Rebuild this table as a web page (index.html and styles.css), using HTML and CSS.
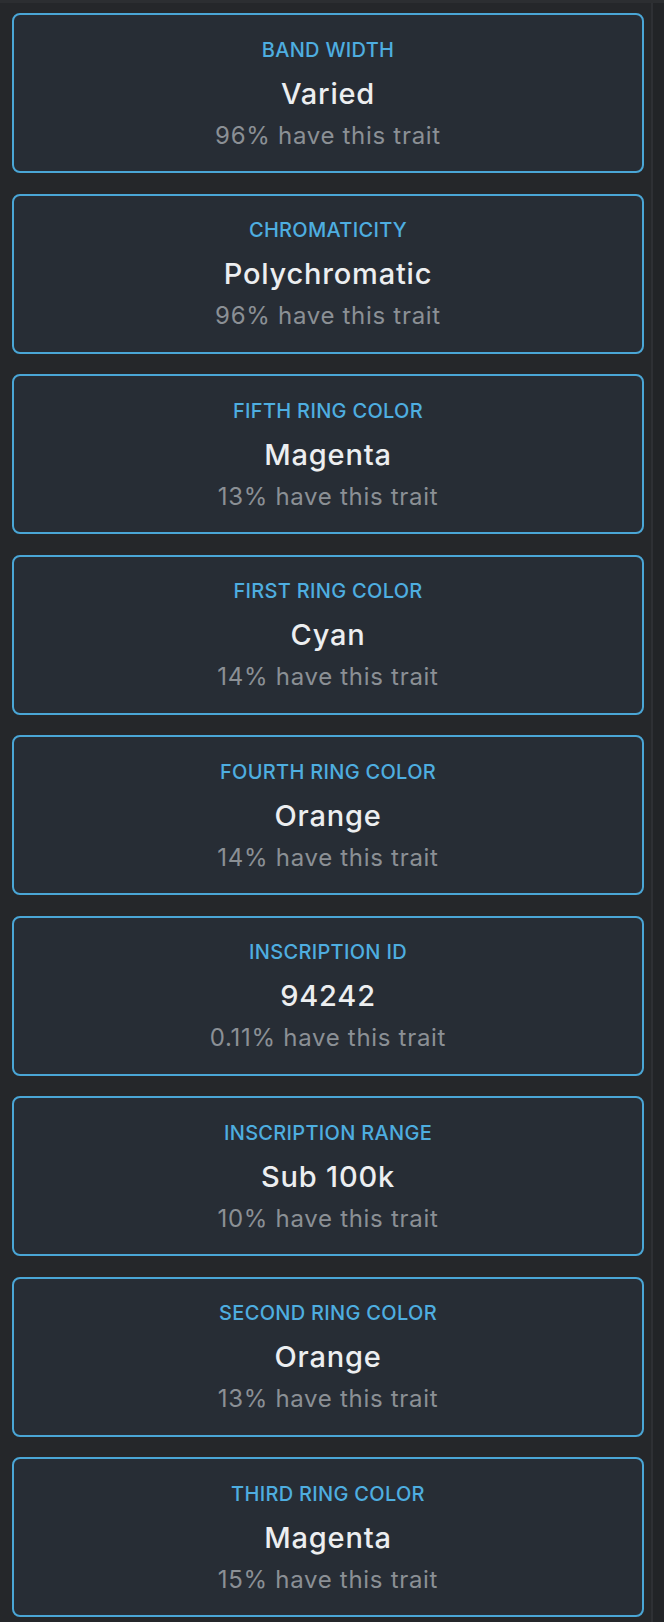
FILE: index.html
```html
<!DOCTYPE html>
<html>
<head>
<title>Traits</title>
<link rel="stylesheet" href="styles.css">
</head>
<body>
  <div class="topbar"></div>
  <div class="page">
    <div class="traits">
      <div class="trait">
        <p class="trait-name">BAND WIDTH</p>
        <p class="trait-value">Varied</p>
        <p class="trait-rarity">96% have this trait</p>
      </div>
      <div class="trait">
        <p class="trait-name">CHROMATICITY</p>
        <p class="trait-value">Polychromatic</p>
        <p class="trait-rarity">96% have this trait</p>
      </div>
      <div class="trait">
        <p class="trait-name">FIFTH RING COLOR</p>
        <p class="trait-value">Magenta</p>
        <p class="trait-rarity">13% have this trait</p>
      </div>
      <div class="trait">
        <p class="trait-name">FIRST RING COLOR</p>
        <p class="trait-value">Cyan</p>
        <p class="trait-rarity">14% have this trait</p>
      </div>
      <div class="trait">
        <p class="trait-name">FOURTH RING COLOR</p>
        <p class="trait-value">Orange</p>
        <p class="trait-rarity">14% have this trait</p>
      </div>
      <div class="trait">
        <p class="trait-name">INSCRIPTION ID</p>
        <p class="trait-value">94242</p>
        <p class="trait-rarity">0.11% have this trait</p>
      </div>
      <div class="trait">
        <p class="trait-name">INSCRIPTION RANGE</p>
        <p class="trait-value">Sub 100k</p>
        <p class="trait-rarity">10% have this trait</p>
      </div>
      <div class="trait">
        <p class="trait-name">SECOND RING COLOR</p>
        <p class="trait-value">Orange</p>
        <p class="trait-rarity">13% have this trait</p>
      </div>
      <div class="trait">
        <p class="trait-name">THIRD RING COLOR</p>
        <p class="trait-value">Magenta</p>
        <p class="trait-rarity">15% have this trait</p>
      </div>
    </div>
    <div class="scrollbar"></div>
  </div>
</body>
</html>
```

FILE: styles.css
```css
body {
    margin: 0;
    background-color: #25272a;
    font-family: Inter, "Liberation Sans", sans-serif;
}

.topbar {
    height: 3px;
    background-color: #2c2e31;
}

.page {
    display: flex;
    height: 1619px;
}

.traits {
    flex: 1;
    display: flex;
    flex-direction: column;
    gap: 20.5px;
    padding: 10px 7px 0 12px;
}

.trait {
    box-sizing: border-box;
    height: 160px;
    border: 2px solid #4aa6d6;
    border-radius: 8px;
    background-color: #272d35;
    display: flex;
    flex-direction: column;
    justify-content: center;
    align-items: center;
    padding-top: 1px;
}

.trait p {
    margin: 0;
    text-align: center;
}

.trait-name {
    color: #4eaee0;
    font-size: 20px;
    font-weight: 500;
    letter-spacing: 0.3px;
    line-height: 28px;
    margin-bottom: 12px !important;
}

.trait-value {
    color: #eceef0;
    font-size: 29px;
    font-weight: 500;
    letter-spacing: 0.8px;
    line-height: 36px;
    margin-bottom: 8px !important;
}

.trait-rarity {
    color: #8b9095;
    font-size: 24px;
    letter-spacing: 0.7px;
    line-height: 32px;
}

.scrollbar {
    width: 11px;
    border-left: 2px solid #2e3034;
    background-color: #222427;
}
```
